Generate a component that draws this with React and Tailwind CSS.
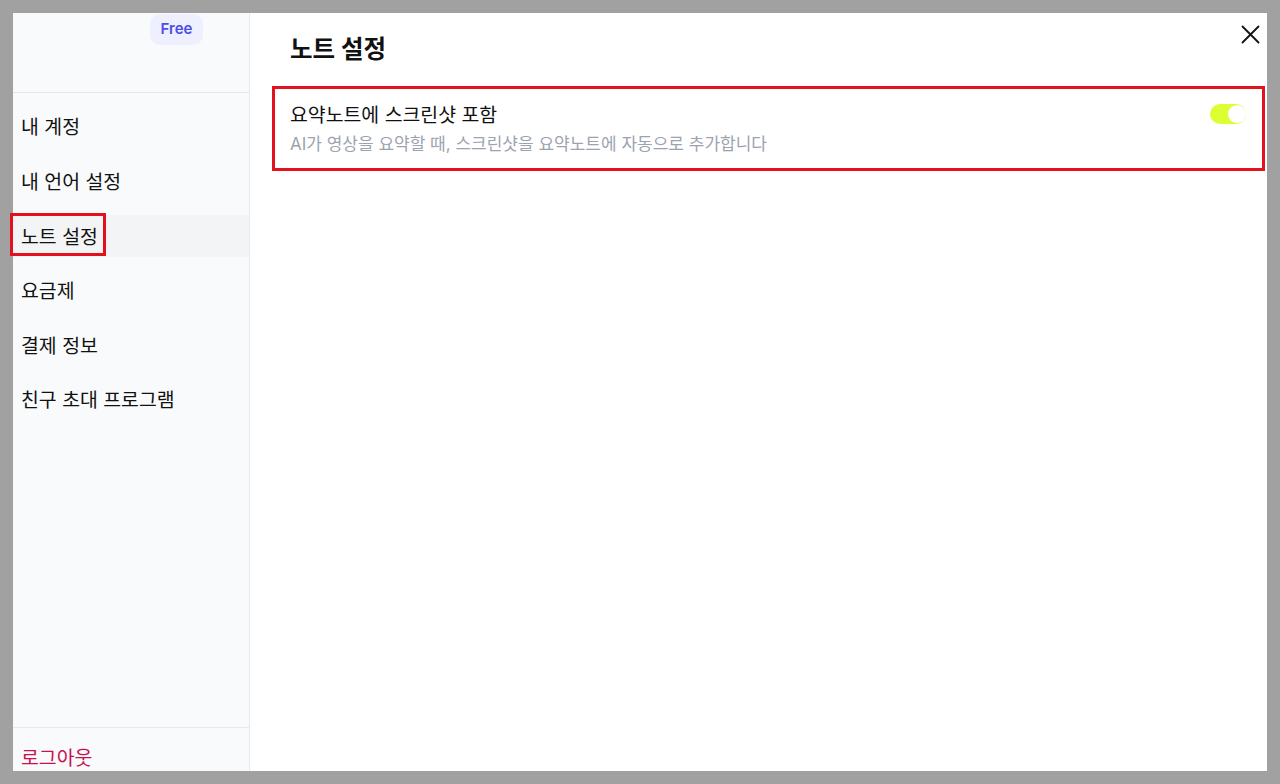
import React from "react";

const navItems = ["내 계정", "내 언어 설정", "노트 설정", "요금제", "결제 정보", "친구 초대 프로그램"];

export default function App() {
  return (
    <div
      className="w-[1280px] h-[784px] bg-[#a1a1a1] p-[13px] overflow-hidden"
      style={{ fontFamily: 'Inter, "Noto Sans CJK KR", "Noto Sans", sans-serif' }}
    >
      <div className="relative flex h-full w-full bg-white">
        {/* Sidebar */}
        <aside className="flex w-[237px] flex-col border-r border-[#e8e9ec] bg-[#f9fafb]">
          <div className="h-[80px] border-b border-[#e5e7eb]">
            <div className="ml-[137px] mt-[1px] inline-flex h-[31px] w-[53px] items-center justify-center rounded-[10px] bg-[#eef0ff] text-[15px] font-semibold text-[#4b4fe3]">
              Free
            </div>
          </div>
          <nav className="flex flex-1 flex-col gap-[12.6px] pt-[13px]">
            {navItems.map((item) => {
              const active = item === "노트 설정";
              return (
                <div
                  key={item}
                  className={`relative flex h-[42px] items-center pl-2 pt-[2px] text-[19.4px] text-[#111111] ${active ? "bg-[#f3f4f5]" : ""}`}
                >
                  {item}
                  {active && (
                    <div className="pointer-events-none absolute left-[-3px] top-[-2px] h-[43px] w-[96px] border-[3px] border-[#e3111d]" />
                  )}
                </div>
              );
            })}
          </nav>
          <div className="h-[44px] border-t border-[#e8e9ec] pl-2 pt-[17px] text-[19.4px] leading-[26px] text-[#c8114f]">
            로그아웃
          </div>
        </aside>

        {/* Main */}
        <main className="flex-1 pl-6 pr-5 pt-[21px]">
          <h1 className="pl-4 text-[24.5px] font-bold leading-[31px] text-[#111111]">노트 설정</h1>
          <div className="relative mt-[25px] flex items-start justify-between pb-3 pl-4 pt-3">
            <div className="flex flex-col">
              <div className="text-[19.4px] leading-[26px] text-[#111111]">요약노트에 스크린샷 포함</div>
              <div className="mt-[4px] text-[17px] leading-[24px] text-[#9ca3af]">
                AI가 영상을 요약할 때, 스크린샷을 요약노트에 자동으로 추가합니다
              </div>
            </div>
            <div className="mr-[1px] mt-[2px] flex h-[20px] w-[36px] items-center justify-end rounded-full bg-[#dcff33]">
              <div className="h-[18px] w-[18px] rounded-full bg-white" />
            </div>
            <div className="pointer-events-none absolute left-[-2px] top-[-4px] h-[85px] w-[993px] border-[3px] border-[#e3111d]" />
          </div>
        </main>

        {/* Close */}
        <button className="absolute right-[7px] top-[11px] flex h-[20px] w-[20px] items-center justify-center">
          <svg width="19" height="19" viewBox="0 0 19 19" fill="none">
            <path d="M1.5 1.5 L17.5 17.5 M17.5 1.5 L1.5 17.5" stroke="#111" strokeWidth="1.8" strokeLinecap="round" />
          </svg>
        </button>
      </div>
    </div>
  );
}
